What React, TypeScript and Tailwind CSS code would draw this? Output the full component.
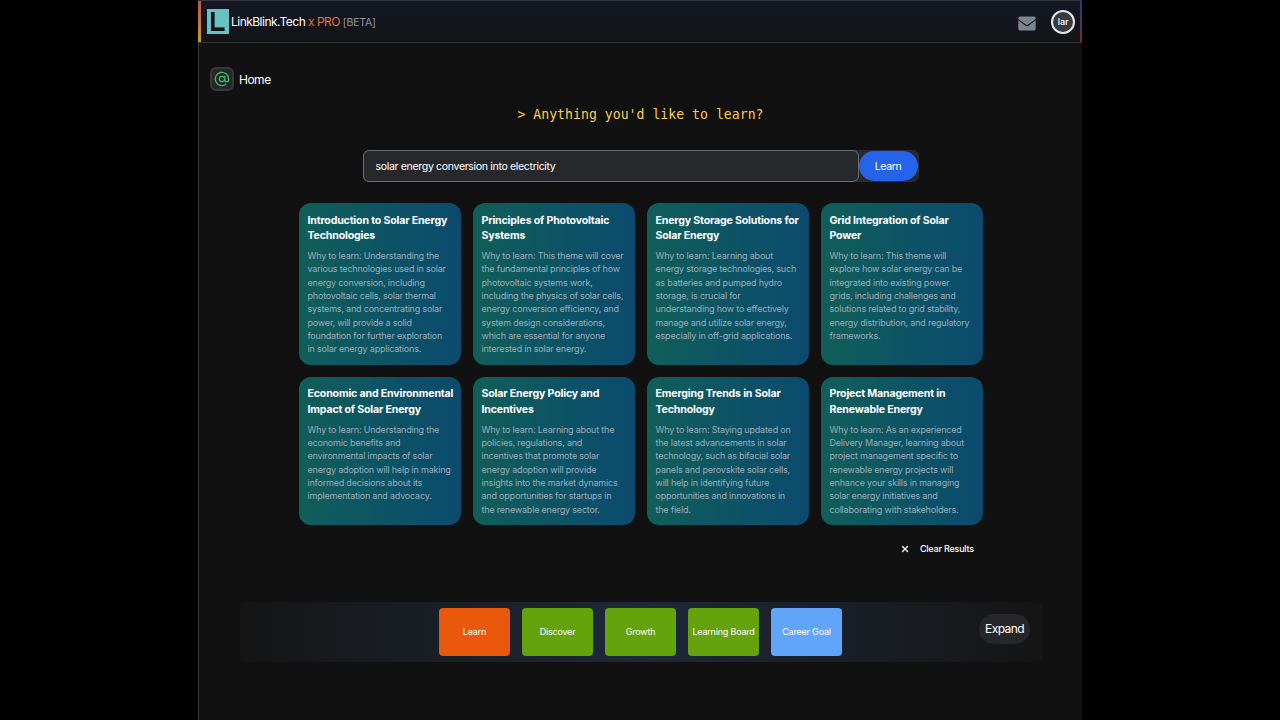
import { useState } from 'react';
import { AtSign, X } from 'lucide-react';

const THEMES = [
  {
    title: 'Introduction to Solar Energy\nTechnologies',
    why: 'Why to learn: Understanding the\nvarious technologies used in solar\nenergy conversion, including\nphotovoltaic cells, solar thermal\nsystems, and concentrating solar\npower, will provide a solid\nfoundation for further exploration\nin solar energy applications.',
  },
  {
    title: 'Principles of Photovoltaic\nSystems',
    why: 'Why to learn: This theme will cover\nthe fundamental principles of how\nphotovoltaic systems work,\nincluding the physics of solar cells,\nenergy conversion efficiency, and\nsystem design considerations,\nwhich are essential for anyone\ninterested in solar energy.',
  },
  {
    title: 'Energy Storage Solutions for\nSolar Energy',
    why: 'Why to learn: Learning about\nenergy storage technologies, such\nas batteries and pumped hydro\nstorage, is crucial for\nunderstanding how to effectively\nmanage and utilize solar energy,\nespecially in off-grid applications.',
  },
  {
    title: 'Grid Integration of Solar\nPower',
    why: 'Why to learn: This theme will\nexplore how solar energy can be\nintegrated into existing power\ngrids, including challenges and\nsolutions related to grid stability,\nenergy distribution, and regulatory\nframeworks.',
  },
  {
    title: 'Economic and Environmental\nImpact of Solar Energy',
    why: 'Why to learn: Understanding the\neconomic benefits and\nenvironmental impacts of solar\nenergy adoption will help in making\ninformed decisions about its\nimplementation and advocacy.',
  },
  {
    title: 'Solar Energy Policy and\nIncentives',
    why: 'Why to learn: Learning about the\npolicies, regulations, and\nincentives that promote solar\nenergy adoption will provide\ninsights into the market dynamics\nand opportunities for startups in\nthe renewable energy sector.',
  },
  {
    title: 'Emerging Trends in Solar\nTechnology',
    why: 'Why to learn: Staying updated on\nthe latest advancements in solar\ntechnology, such as bifacial solar\npanels and perovskite solar cells,\nwill help in identifying future\nopportunities and innovations in\nthe field.',
  },
  {
    title: 'Project Management in\nRenewable Energy',
    why: 'Why to learn: As an experienced\nDelivery Manager, learning about\nproject management specific to\nrenewable energy projects will\nenhance your skills in managing\nsolar energy initiatives and\ncollaborating with stakeholders.',
  },
];

const TABS = [
  { label: 'Learn', color: 'bg-[#ea580c]' },
  { label: 'Discover', color: 'bg-[#65a30d]' },
  { label: 'Growth', color: 'bg-[#65a30d]' },
  { label: 'Learning Board', color: 'bg-[#65a30d]' },
  { label: 'Career Goal', color: 'bg-[#60a5fa]' },
];

function Logo() {
  return (
    <svg width="22" height="25" viewBox="0 0 22 25">
      <rect width="22" height="25" fill="#67c3c3" />
      <rect x="4" y="3" width="3.6" height="19" fill="#111" />
      <rect x="4" y="18.4" width="13.6" height="3.6" fill="#111" />
    </svg>
  );
}

function MailIcon() {
  return (
    <svg width="18" height="15" viewBox="0 0 18 15" fill="#7b8491">
      <path d="M2 .5h14A1.7 1.7 0 0 1 17.7 2v.9L10.2 8.6a2 2 0 0 1-2.4 0L.3 2.9V2A1.7 1.7 0 0 1 2 .5Z" />
      <path d="M.3 4.3 7.1 9.5a3.1 3.1 0 0 0 3.8 0l6.8-5.2v8.4a1.7 1.7 0 0 1-1.7 1.7H2a1.7 1.7 0 0 1-1.7-1.7Z" />
    </svg>
  );
}

export default function App() {
  const [query, setQuery] = useState('solar energy conversion into electricity');

  return (
    <div className="flex h-[720px] w-[1280px] justify-center overflow-hidden bg-black font-['Inter',sans-serif] text-white">
      <main className="flex w-[884px] flex-col border-l border-[#3a3a3a] bg-[#111111]">

        {/* Top bar */}
        <header className="-ml-px flex h-[43px] shrink-0 border-y border-[#333537] bg-linear-to-b from-[#141827] to-[#131415]">
          <div className="w-[3px] bg-linear-to-b from-[#c0504d] to-[#c99a2e]" />
          <div className="flex flex-1 items-center pr-[5px] pl-[6px]">
            <Logo />
            <p className="ml-[2px] text-[12px] tracking-[-0.52px] whitespace-nowrap">
              LinkBlink.Tech <span className="text-[#e0703a]">x PRO</span>{' '}
              <span className="text-[10.6px] tracking-[-0.25px] text-[#8b93a0]">[BETA]</span>
            </p>
            <div className="ml-auto flex items-center gap-[15px]">
              <div className="pt-[3px]"><MailIcon /></div>
              <div className="flex size-6 items-center justify-center rounded-full border-2 border-[#e5e7eb] bg-[#3a3b42] text-[9px] font-medium tracking-[-0.1px]">lar</div>
            </div>
          </div>
          <div className="w-0.5 bg-linear-to-b from-[#2c3478] to-[#7a2130]" />
        </header>

        {/* Breadcrumb */}
        <div className="mt-6 ml-[11px] flex items-center gap-[5px]">
          <div className="flex size-6 items-center justify-center rounded-[6px] border-2 border-[#37373e] bg-[#27272a] text-[#3fb568]">
            <AtSign size={16} strokeWidth={2} className="shrink-0" />
          </div>
          <span className="pt-[2px] text-[12px] tracking-[-0.5px]">Home</span>
        </div>

        <h1 className="mt-[14px] text-center font-['DejaVu_Sans_Mono',monospace] text-[13.2px] leading-5 text-[#facc4d]">
          &gt; Anything you'd like to learn?
        </h1>

        {/* Search */}
        <div className="mx-auto mt-[25px] flex h-8 w-[556px] rounded-md border border-[#2c2c2e] bg-[#27282b]">
          <input
            value={query}
            onChange={(e) => setQuery(e.target.value)}
            className="-m-px w-[496px] rounded-md border border-[#6b7075] bg-[#27282c] px-3 pt-[2px] text-[10.6px] tracking-[-0.36px] outline-none"
          />
          <button className="ml-px flex-1 rounded-full bg-[#2563eb] pt-px text-[10.6px] tracking-[-0.4px]">Learn</button>
        </div>

        {/* Suggested themes */}
        <div className="mx-auto mt-[21px] grid w-[684px] grid-cols-4 gap-3">
          {THEMES.map((theme) => (
            <article key={theme.title} className="rounded-xl bg-linear-to-r from-[#115e59] to-[#0c4a6e] px-[9px] pt-[9.6px] pb-[9px] whitespace-pre">
              <h2 className="text-[10.6px] leading-[15.5px] font-bold tracking-[-0.17px]">{theme.title}</h2>
              <p className="mt-[5.4px] text-[9px] leading-[13.33px] tracking-[-0.2px] text-[#9aacb8]">{theme.why}</p>
            </article>
          ))}
        </div>

        <button className="mt-[17px] mr-[108px] flex items-center gap-[10px] self-end text-[9px] leading-[14px] font-medium tracking-[-0.2px]">
          <X size={10} strokeWidth={3} />
          Clear Results
        </button>

        {/* Bottom bar */}
        <nav className="mt-[46px] ml-[41px] flex h-[60px] w-[802px] items-center rounded bg-linear-to-r from-[#151515] via-[#1e293b] to-[#151515] pl-[199px]">
          <div className="flex gap-3">
            {TABS.map((tab) => (
              <button key={tab.label} className={`h-12 w-[71px] rounded pb-px text-[9px] tracking-[-0.2px] whitespace-nowrap ${tab.color}`}>
                {tab.label}
              </button>
            ))}
          </div>
          <button className="mr-3 mb-[6px] ml-auto h-[30px] w-[51px] rounded-full bg-[#27272a] text-[12px] tracking-[-0.6px]">Expand</button>
        </nav>
      </main>
    </div>
  );
}
